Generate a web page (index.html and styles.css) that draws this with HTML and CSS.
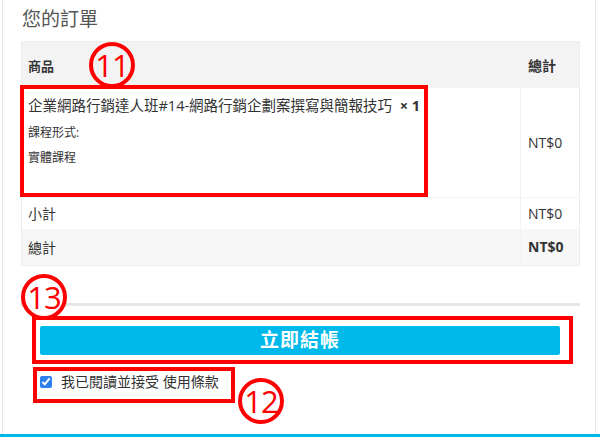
FILE: index.html
```html
<!DOCTYPE html>
<html lang="zh-Hant">
<head>
<meta charset="utf-8">
<title>您的訂單</title>
<link rel="stylesheet" href="styles.css">
</head>
<body>
<div class="page">
  <div class="card">
    <h3 class="title">您的訂單</h3>
    <table class="order">
      <thead>
        <tr>
          <th class="col-name">商品</th>
          <th class="col-total">總計</th>
        </tr>
      </thead>
      <tbody>
        <tr class="item">
          <td class="col-name">
            <div class="pname">企業網路行銷達人班#14-網路行銷企劃案撰寫與簡報技巧&nbsp;&nbsp;<strong class="qty">× 1</strong></div>
            <div class="meta-k">課程形式:</div>
            <div class="meta-v">實體課程</div>
          </td>
          <td class="col-total mid">NT$0</td>
        </tr>
      </tbody>
      <tfoot>
        <tr class="sub">
          <th class="col-name">小計</th>
          <td class="col-total">NT$0</td>
        </tr>
        <tr class="grand">
          <th class="col-name">總計</th>
          <td class="col-total"><strong>NT$0</strong></td>
        </tr>
      </tfoot>
    </table>
    <div class="sep"></div>
    <div class="pay">
      <button class="btn" type="button">立即結帳</button>
      <label class="terms"><input type="checkbox" checked> <span>我已閱讀並接受 使用條款</span></label>
    </div>
  </div>
  <div class="bottom-bar"></div>

  <div class="mark box-11"></div>
  <div class="mark box-13"></div>
  <div class="mark box-12"></div>
  <div class="num n-11">11</div>
  <div class="num n-13">13</div>
  <div class="num n-12">12</div>
</div>
</body>
</html>
```

FILE: styles.css
```css
html, body {
  margin: 0;
  padding: 0;
  background: #fff;
}
body {
  font-family: "Open Sans", "Noto Sans CJK TC", sans-serif;
  color: #333;
}
.page {
  position: relative;
  width: 600px;
  height: 437px;
  overflow: hidden;
}
.card {
  margin-left: 2px;
  width: 594px;
  height: 434px;
  box-sizing: border-box;
  border-left: 1px solid #e6e6e6;
  border-right: 1px solid #e6e6e6;
  padding: 6px 15px 0 18px;
}
.title {
  margin: 0 0 9px 1px;
  font-size: 19px;
  line-height: 26px;
  font-weight: 400;
  color: #555;
}
.order {
  width: 100%;
  border-collapse: collapse;
  border: 1px solid #ececec;
  font-size: 14px;
}
.order th, .order td {
  text-align: left;
  padding: 0 6px;
}
.order .col-total {
  width: 45px;
  padding-left: 7px;
  border-left: 1px solid #f3f3f3;
}
.order thead th {
  background: #f3f3f3;
  height: 46px;
  font-size: 13px;
  font-weight: 700;
  color: #333;
  border-left-color: #f7f7f7;
}
.order thead th.col-total {
  font-size: 14px;
}
.item td {
  height: 109px;
  box-sizing: border-box;
  vertical-align: top;
  padding-top: 8px;
}
.item td.mid {
  vertical-align: middle;
  padding-top: 0;
}
.pname {
  line-height: 20px;
  font-size: 14.5px;
  color: #333;
}
.qty {
  font-weight: 700;
}
.meta-k {
  margin-top: 7px;
  font-size: 12px;
  line-height: 20px;
}
.meta-v {
  margin-top: 5px;
  font-size: 12px;
  line-height: 20px;
}
.order tfoot th {
  font-weight: 400;
}
.sub th, .sub td {
  height: 31px;
  border-top: 1px solid #f3f3f3;
}
.grand th, .grand td {
  height: 36px;
  background: #f7f7f7;
}
.grand strong {
  font-weight: 700;
}
.sep {
  margin-top: 37px;
  height: 3px;
  background: #e6e6e6;
}
.pay {
  padding: 20px 20px 0 19px;
}
.btn {
  display: block;
  width: 100%;
  height: 29px;
  border: 0;
  border-radius: 2px;
  background: #00b9eb;
  color: #fff;
  font-family: "Open Sans", "Noto Sans CJK TC", sans-serif;
  font-size: 19px;
  font-weight: 700;
  letter-spacing: 1px;
  line-height: 29px;
  padding: 0;
}
.terms {
  display: flex;
  align-items: center;
  gap: 9px;
  margin-top: 20px;
  font-size: 14px;
  line-height: 14px;
  color: #333;
}
.terms input {
  margin: 0;
  width: 12px;
  height: 12px;
  accent-color: #2d7ff0;
}
.bottom-bar {
  height: 3px;
  background: #00b9eb;
}

/* annotation overlays */
.mark {
  position: absolute;
  border: 4px solid #f00;
  box-sizing: border-box;
}
.box-11 { left: 20px; top: 85px; width: 408px; height: 112px; }
.box-13 { left: 32px; top: 316px; width: 541px; height: 48px; }
.box-12 { left: 33px; top: 367px; width: 202px; height: 36px; }
.num {
  position: absolute;
  width: 46px;
  height: 46px;
  box-sizing: border-box;
  border: 4px solid #f00;
  border-radius: 50%;
  color: #f00;
  font-family: "Open Sans", sans-serif;
  font-size: 31px;
  font-weight: 400;
  line-height: 38px;
  text-align: center;
  letter-spacing: -1px;
}
.n-11 { left: 89px; top: 42px; background: #f3f3f3; }
.n-13 { left: 21px; top: 274px; background: #fff; }
.n-12 { left: 238px; top: 378px; background: #fff; }
```
